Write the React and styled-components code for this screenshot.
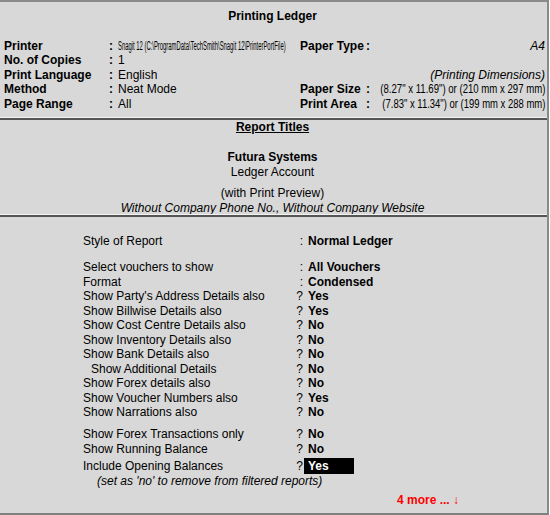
import React from 'react';
import styled, { createGlobalStyle } from 'styled-components';

const GlobalStyle = createGlobalStyle`
  html, body {
    margin: 0;
    padding: 0;
    background: #ffffff;
  }
  body {
    font-family: "Liberation Sans", Arial, sans-serif;
    font-size: 12px;
    color: #000;
  }
`;

const Window = styled.div`
  box-sizing: border-box;
  width: 549px;
  height: 515px;
  background: #d8d8d8;
  border-top: 2px solid #8a8a8a;
  border-right: 2px solid #8a8a8a;
  border-bottom: 2px solid #808080;
  line-height: 14.5px;
  display: flex;
  flex-direction: column;
  overflow: hidden;
`;

const TopSection = styled.div`
  padding: 6.75px 2px 5.75px 4px;
`;

const Title = styled.div`
  text-align: center;
  font-weight: bold;
  margin-bottom: 15.5px;
  padding-right: 4px;
`;

const TopGrid = styled.div`
  display: grid;
  grid-template-columns: 105px 9px 182px minmax(0, 1fr);
  grid-auto-rows: 14.5px;
  white-space: nowrap;
`;

const Label = styled.div`
  font-weight: bold;
`;

const Value = styled.div`
  min-width: 0;
  overflow: visible;
`;

const Condensed = styled.span`
  display: inline-block;
  white-space: nowrap;
  transform: scaleX(${(p) => p.$scale});
  transform-origin: ${(p) => (p.$right ? 'right' : 'left')} center;
`;

const RightCell = styled.div`
  display: flex;
  min-width: 0;
  justify-content: ${(p) => (p.$end ? 'flex-end' : 'flex-start')};
`;

const RightLabel = styled.span`
  font-weight: bold;
  width: 66px;
  flex-shrink: 0;
`;

const RightColon = styled.span`
  font-weight: bold;
  width: 12px;
  flex-shrink: 0;
`;

const RightValue = styled.span`
  flex: 1 1 0;
  display: flex;
  justify-content: flex-end;
  font-style: ${(p) => (p.$italic ? 'italic' : 'normal')};
  min-width: 0;
`;

const Divider = styled.div`
  height: 2px;
  background: #555555;
  border-top: 1px solid #f2f2f2;
  flex-shrink: 0;
`;

const TitlesSection = styled.div`
  text-align: center;
  padding-right: 2px;
`;

const TitleLine = styled.div`
  font-weight: ${(p) => (p.$bold ? 'bold' : 'normal')};
  font-style: ${(p) => (p.$italic ? 'italic' : 'normal')};
  text-decoration: ${(p) => (p.$underline ? 'underline' : 'none')};
  margin-top: ${(p) => p.$gap || 0}px;
  line-height: ${(p) => p.$lh || 14.5}px;
`;

const OptionsSection = styled.div`
  padding-top: 17.25px;
`;

const Group = styled.div`
  margin-top: ${(p) => p.$gap || 0}px;
`;

const Row = styled.div`
  display: grid;
  grid-template-columns: 212px 13px auto;
  padding-left: 83px;
  line-height: ${(p) => (p.$tall ? 16 : 14.5)}px;
  white-space: nowrap;
`;

const OptLabel = styled.div`
  padding-left: ${(p) => (p.$indent ? 8 : 0)}px;
`;

const Sep = styled.div`
  text-align: center;
  padding-right: ${(p) => (p.$q ? 4 : 0)}px;
`;

const OptValue = styled.div`
  font-weight: bold;
  ${(p) =>
    p.$selected &&
    `
    background: #000;
    color: #fff;
    margin-left: -4px;
    padding-left: 4px;
    width: 50px;
    box-sizing: border-box;
  `}
`;

const Note = styled.div`
  font-style: italic;
  padding-left: 97px;
`;

const More = styled.div`
  color: #ff0000;
  font-weight: bold;
  padding-left: 397px;
  margin-top: 4.5px;
`;

const groups = [
  { gap: 0, rows: [['Style of Report', ':', 'Normal Ledger']] },
  {
    gap: 11.5,
    rows: [
      ['Select vouchers to show', ':', 'All Vouchers'],
      ['Format', ':', 'Condensed'],
      ["Show Party's Address Details also", '?', 'Yes'],
      ['Show Billwise Details also', '?', 'Yes'],
      ['Show Cost Centre Details also', '?', 'No'],
      ['Show Inventory Details also', '?', 'No'],
      ['Show Bank Details also', '?', 'No'],
      ['Show Additional Details', '?', 'No', true],
      ['Show Forex details also', '?', 'No'],
      ['Show Voucher Numbers also', '?', 'Yes'],
      ['Show Narrations also', '?', 'No'],
    ],
  },
  {
    gap: 7.5,
    rows: [
      ['Show Forex Transactions only', '?', 'No'],
      ['Show Running Balance', '?', 'No'],
    ],
  },
];

function App() {
  return (
    <React.Fragment>
      <GlobalStyle />
      <Window>
        <TopSection>
          <Title>Printing Ledger</Title>
          <TopGrid>
            <Label>Printer</Label>
            <Label>:</Label>
            <Value>
              <Condensed $scale={0.49}>
                Snagit 12 (C:\ProgramData\TechSmith\Snagit 12\PrinterPortFile)
              </Condensed>
            </Value>
            <RightCell>
              <RightLabel>Paper Type</RightLabel>
              <RightColon>:</RightColon>
              <RightValue $italic>A4</RightValue>
            </RightCell>

            <Label>No. of Copies</Label>
            <Label>:</Label>
            <Value>1</Value>
            <RightCell />

            <Label>Print Language</Label>
            <Label>:</Label>
            <Value>English</Value>
            <RightCell $end>
              <RightValue $italic>(Printing Dimensions)</RightValue>
            </RightCell>

            <Label>Method</Label>
            <Label>:</Label>
            <Value>Neat Mode</Value>
            <RightCell>
              <RightLabel>Paper Size</RightLabel>
              <RightColon>:</RightColon>
              <RightValue>
                <Condensed $scale={0.8} $right>
                  (8.27" x 11.69") or (210 mm x 297 mm)
                </Condensed>
              </RightValue>
            </RightCell>

            <Label>Page Range</Label>
            <Label>:</Label>
            <Value>All</Value>
            <RightCell>
              <RightLabel>Print Area</RightLabel>
              <RightColon>:</RightColon>
              <RightValue>
                <Condensed $scale={0.79} $right>
                  (7.83" x 11.34") or (199 mm x 288 mm)
                </Condensed>
              </RightValue>
            </RightCell>
          </TopGrid>
        </TopSection>

        <Divider />

        <TitlesSection>
          <TitleLine $bold $underline>Report Titles</TitleLine>
          <TitleLine $bold $gap={15.5}>Futura Systems</TitleLine>
          <TitleLine>Ledger Account</TitleLine>
          <TitleLine $gap={7}>(with Print Preview)</TitleLine>
          <TitleLine $italic $gap={2.25} $lh={11}>
            Without Company Phone No., Without Company Website
          </TitleLine>
        </TitlesSection>

        <Divider />

        <OptionsSection>
          {groups.map((group, gi) => (
            <Group key={`group_${gi}`} $gap={group.gap}>
              {group.rows.map(([label, sep, value, indent]) => (
                <Row key={label}>
                  <OptLabel $indent={indent}>{label}</OptLabel>
                  <Sep $q={sep === '?'}>{sep}</Sep>
                  <OptValue>{value}</OptValue>
                </Row>
              ))}
            </Group>
          ))}
          <Group $gap={2.25}>
            <Row $tall>
              <OptLabel>Include Opening Balances</OptLabel>
              <Sep $q>?</Sep>
              <OptValue $selected>Yes</OptValue>
            </Row>
          </Group>
          <Note>(set as 'no' to remove from filtered reports)</Note>
          <More>4 more ... ↓</More>
        </OptionsSection>
      </Window>
    </React.Fragment>
  );
}

export default App;
